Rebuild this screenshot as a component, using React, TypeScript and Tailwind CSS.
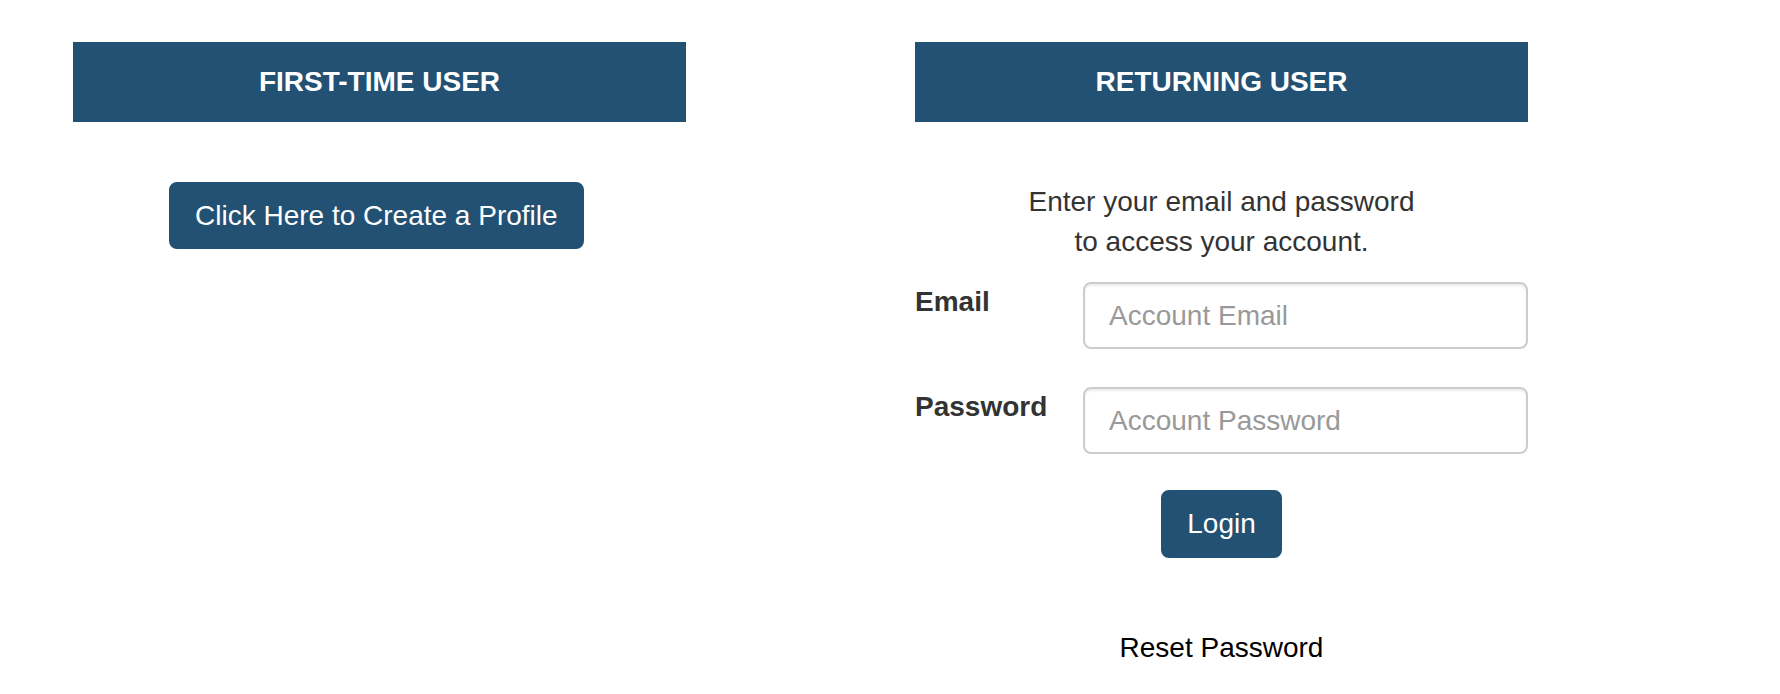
export default function App() {
  return (
    <div className="min-h-[694px] bg-white font-['Liberation_Sans',Arial,sans-serif] text-[28px] leading-[40px] text-[#333]">
      <div className="flex items-start pl-[73px] pt-[42px]">
        {/* First-time user */}
        <div className="w-[613px]">
          <div className="flex h-[80px] items-center justify-center bg-[#225173] font-bold text-white">
            FIRST-TIME USER
          </div>
          <button
            type="button"
            className="ml-[96px] mt-[60px] h-[67px] rounded-[8px] border-2 border-[#225173] bg-[#225173] px-[24px] text-white"
          >
            Click Here to Create a Profile
          </button>
        </div>

        {/* Returning user */}
        <div className="ml-[229px] w-[613px]">
          <div className="flex h-[80px] items-center justify-center bg-[#225173] font-bold text-white">
            RETURNING USER
          </div>
          <div className="mt-[60px]">
            <p className="mb-[20px] text-center">
              Enter your email and password
              <br />
              to access your account.
            </p>
            <div className="mb-[38px] flex items-start">
              <label className="w-[168px] shrink-0 font-bold">Email</label>
              <input
                type="email"
                placeholder="Account Email"
                className="h-[67px] min-w-0 flex-1 rounded-[8px] border-2 border-[#ccc] px-[24px] text-[#555] shadow-[inset_0_2px_2px_rgba(0,0,0,0.075)] outline-none placeholder:text-[#999]"
              />
            </div>
            <div className="flex items-start">
              <label className="w-[168px] shrink-0 font-bold">Password</label>
              <input
                type="password"
                placeholder="Account Password"
                className="h-[67px] min-w-0 flex-1 rounded-[8px] border-2 border-[#ccc] px-[24px] text-[#555] shadow-[inset_0_2px_2px_rgba(0,0,0,0.075)] outline-none placeholder:text-[#999]"
              />
            </div>
            <div className="mt-[36px] flex justify-center">
              <button
                type="button"
                className="h-[68px] rounded-[8px] border-2 border-[#225173] bg-[#225173] px-[24px] text-white"
              >
                Login
              </button>
            </div>
            <div className="mt-[70px] text-center text-black">Reset Password</div>
          </div>
        </div>
      </div>
    </div>
  );
}
